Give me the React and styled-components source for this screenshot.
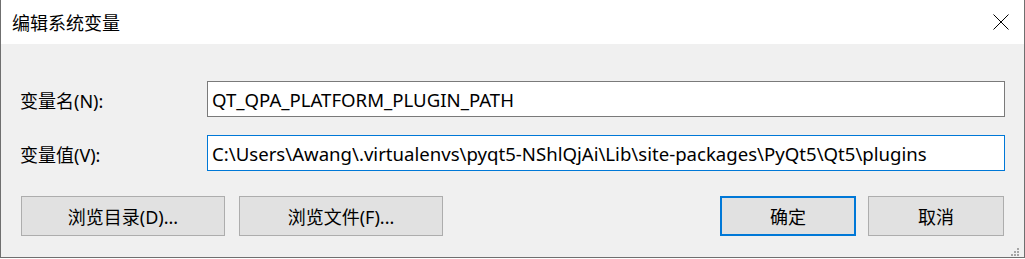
import React from 'react'
import styled, { createGlobalStyle } from 'styled-components'

const GlobalStyle = createGlobalStyle`
html, body {
    margin: 0;
    padding: 0;
    background: #ffffff;
}
* {
    box-sizing: border-box;
}
`

const Window = styled.div`
position: relative;
width: 1025px;
height: 258px;
display: flex;
flex-direction: column;
border: 1px solid #6f6f6f;
border-top: none;
background: #f0f0f0;
font-family: "Noto Sans", "Noto Sans CJK SC", sans-serif;
font-size: 18px;
color: #000;
`

const TitleBar = styled.div`
height: 44px;
flex-shrink: 0;
display: flex;
align-items: center;
justify-content: space-between;
padding-left: 11px;
background: #ffffff;
`

const Title = styled.div`
font-family: "Noto Sans CJK SC", sans-serif;
font-size: 18px;
`

const CloseButton = styled.div`
width: 46px;
height: 44px;
display: flex;
align-items: center;
justify-content: center;
`

const Body = styled.div`
flex: 1;
padding: 37px 19px 0 19px;
`

const Form = styled.div`
display: grid;
grid-template-columns: 187px 1fr;
row-gap: 18px;
align-items: center;
`

const Label = styled.label`
padding-top: 2px;
`

const Field = styled.div`
height: 36px;
display: flex;
align-items: center;
padding-left: 4px;
font-size: 18.6px;
background: #ffffff;
border: 1px solid ${p => (p.focused ? '#0078d7' : '#7a7a7a')};
white-space: nowrap;
overflow: hidden;
`

const ButtonRow = styled.div`
margin-top: 25px;
padding: 0 1px;
display: flex;
justify-content: space-between;
`

const ButtonGroup = styled.div`
display: flex;
gap: ${p => p.gap}px;
`

const Button = styled.div`
width: ${p => p.w}px;
height: 40px;
display: flex;
align-items: center;
justify-content: center;
background: #e1e1e1;
border: ${p => (p.primary ? '2px solid #0078d7' : '1px solid #adadad')};
`

const Grip = styled.svg`
position: absolute;
right: 5px;
bottom: 1px;
`

const CloseIcon = () => (
    <svg width="16" height="16" viewBox="0 0 16 16">
        <path d="M0.5 0.5 L15.5 15.5 M15.5 0.5 L0.5 15.5" stroke="#000" strokeWidth="1" fill="none" />
    </svg>
)

const SizeGrip = () => {
    const dots = [[6, 0], [3, 3], [6, 3], [0, 6], [3, 6], [6, 6]]
    return (
        <Grip width="8" height="8" viewBox="0 0 8 8">
            {dots.map(([x, y]) => (
                <rect key={`${x}-${y}`} x={x} y={y} width="2" height="2" fill="#a6a6a6" />
            ))}
        </Grip>
    )
}

const App = () => {
    return (
        <>
            <GlobalStyle />
            <Window>
                <TitleBar>
                    <Title>编辑系统变量</Title>
                    <CloseButton>
                        <CloseIcon />
                    </CloseButton>
                </TitleBar>
                <Body>
                    <Form>
                        <Label>变量名(N):</Label>
                        <Field>QT_QPA_PLATFORM_PLUGIN_PATH</Field>
                        <Label>变量值(V):</Label>
                        <Field focused>C:\Users\Awang\.virtualenvs\pyqt5-NShlQjAi\Lib\site-packages\PyQt5\Qt5\plugins</Field>
                    </Form>
                    <ButtonRow>
                        <ButtonGroup gap={14}>
                            <Button w={204}>浏览目录(D)...</Button>
                            <Button w={204}>浏览文件(F)...</Button>
                        </ButtonGroup>
                        <ButtonGroup gap={12}>
                            <Button w={136} primary>确定</Button>
                            <Button w={136}>取消</Button>
                        </ButtonGroup>
                    </ButtonRow>
                </Body>
                <SizeGrip />
            </Window>
        </>
    )
}

export default App
